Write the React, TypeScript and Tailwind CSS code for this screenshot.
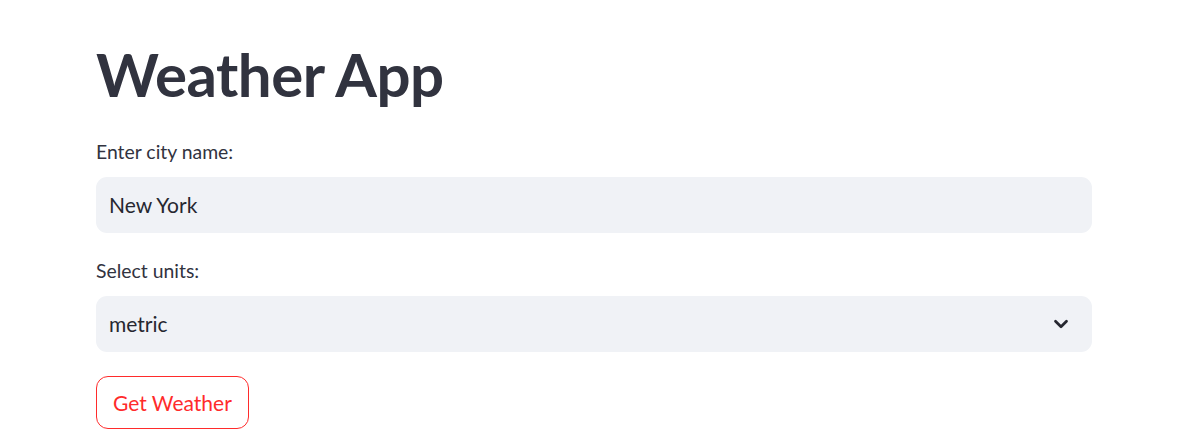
import { ChevronDown } from "lucide-react";

const font = { fontFamily: '"Source Sans Pro", Lato, "Noto Sans", sans-serif' };

function Label({ children }: { children: string }) {
  return <div className="text-[19.4px] leading-[28px] text-[#31333F] mb-[11px]">{children}</div>;
}

export default function App() {
  return (
    <div className="min-h-[446px] bg-white" style={font}>
      <div className="w-[996px] pt-[38px]" style={{ marginLeft: 96 }}>
        <h1 className="text-[60px] font-bold leading-[72px] tracking-[-0.5px] text-[#31333F] mb-[28px]">
          Weather App
        </h1>

        <Label>Enter city name:</Label>
        <div className="flex h-[56px] items-center rounded-[11px] bg-[#F0F2F6] px-[13px] text-[21px] text-[#262730]">
          New York
        </div>

        <div className="mt-[24px]">
          <Label>Select units:</Label>
          <div className="flex h-[56px] items-center justify-between rounded-[11px] bg-[#F0F2F6] pl-[13px] pr-[20px] text-[21px] text-[#262730]">
            <span>metric</span>
            <ChevronDown size={22} strokeWidth={3} className="text-[#262730]" />
          </div>
        </div>

        <button className="mt-[24px] h-[53px] rounded-[12px] border border-[#FF2B2B] bg-white px-[16px] text-[21px] text-[#FF2B2B]">
          Get Weather
        </button>
      </div>
    </div>
  );
}
